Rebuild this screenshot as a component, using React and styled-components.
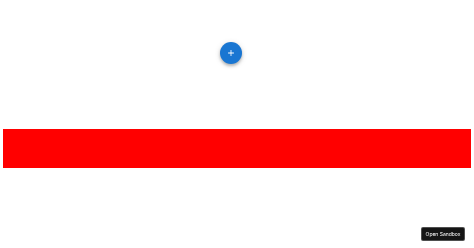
import React from "react";
import styled, { createGlobalStyle } from "styled-components";

const GlobalStyle = createGlobalStyle`
  html, body {
    margin: 0;
    padding: 0;
    background: #ffffff;
    font-family: "Roboto", "Liberation Sans", sans-serif;
  }
`;

const Page = styled.div`
  display: flex;
  flex-direction: column;
  padding: 42px 3px 0 3px;
  height: 248px;
  box-sizing: border-box;
`;

const FabRow = styled.div`
  display: flex;
  justify-content: flex-start;
  padding-left: 217px;
`;

const Fab = styled.button`
  display: flex;
  align-items: center;
  justify-content: center;
  width: 22px;
  height: 22px;
  padding: 0;
  border: none;
  border-radius: 50%;
  background: #1976d2;
  color: #ffffff;
  box-shadow: 0 2px 3px rgba(0, 0, 0, 0.25), 0 1px 6px rgba(0, 0, 0, 0.12);
  cursor: pointer;
`;

const Banner = styled.div`
  margin-top: 65px;
  height: 39px;
  background: #ff0000;
`;

const SandboxButton = styled.button`
  position: fixed;
  right: 9px;
  bottom: 7px;
  width: 44px;
  height: 14px;
  padding: 0;
  border: 1px solid rgba(255, 255, 255, 0.25);
  border-radius: 2px;
  background: #151515;
  color: #ffffff;
  font-family: "Inter", "Liberation Sans", sans-serif;
  font-size: 5px;
  line-height: 12px;
  white-space: nowrap;
  cursor: pointer;
`;

const PlusIcon = () => (
  <svg width="10" height="10" viewBox="0 0 24 24" fill="currentColor">
    <path d="M19 13h-6v6h-2v-6H5v-2h6V5h2v6h6v2z" />
  </svg>
);

export default function App() {
  return (
    <>
      <GlobalStyle />
      <Page>
        <FabRow>
          <Fab aria-label="add">
            <PlusIcon />
          </Fab>
        </FabRow>
        <Banner />
      </Page>
      <SandboxButton>Open Sandbox</SandboxButton>
    </>
  );
}
